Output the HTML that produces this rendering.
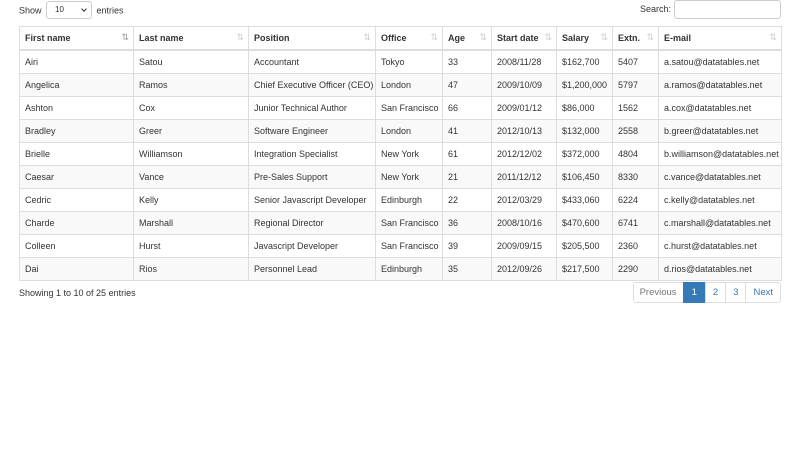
<!DOCTYPE html>
<html><head><style>
body{margin:0;background:#fff;font-family:"Liberation Sans",sans-serif;font-size:9px;color:#333;}
.top{position:absolute;top:0;left:19px;width:762px;height:20px;}
.show{position:absolute;left:0;top:3px;line-height:13px;}
.sel{display:inline-block;width:46px;height:18px;border:1px solid #ccc;border-radius:3px;vertical-align:middle;margin:0 2px;position:relative;font-size:8px;line-height:16px;padding-left:8px;box-sizing:border-box;margin-top:-2px}
.sel:after{content:"";position:absolute;right:5px;top:5px;width:3px;height:3px;border-right:1.2px solid #333;border-bottom:1.2px solid #333;transform:rotate(45deg)}
.search{position:absolute;right:0;top:0;}
.search span{position:absolute;right:110px;top:4px}
.search i{display:block;width:105px;height:17px;border:1px solid #ccc;border-radius:3px;}
table{position:absolute;left:19px;top:26px;border-collapse:collapse;width:762px;table-layout:fixed}
td,th{border:1px solid #ddd;height:22px;padding:0 5px;text-align:left;white-space:nowrap;overflow:hidden;position:relative}
th{font-weight:bold;border-bottom:2px solid #ddd;color:#333}
th:after{content:"⇅";position:absolute;right:4px;top:5px;color:#ccc;font-size:9px;font-weight:normal}
th.s:after{color:#999}
tr:nth-child(odd) td{background:#f9f9f9}
.info{position:absolute;left:19px;top:288px}
.pg{position:absolute;right:19px;top:282px;display:flex;height:21px;font-size:9.5px}
.pg div{border:1px solid #ddd;margin-left:-1px;line-height:19px;padding:0 7px;color:#337ab7}
.pg .d{color:#777;padding:0 6px}.pg .a{background:#337ab7;color:#fff;border-color:#337ab7;padding:0 8px}
.pg div:first-child{border-radius:3px 0 0 3px}.pg div:last-child{border-radius:0 3px 3px 0}
</style></head><body>
<div class="top"><div class="show">Show <span class="sel">10</span> entries</div>
<div class="search"><span>Search:</span><i></i></div></div>
<table>
<colgroup><col style="width:114px"><col style="width:115px"><col style="width:127px"><col style="width:67px"><col style="width:49px"><col style="width:65px"><col style="width:56px"><col style="width:46px"><col style="width:123px"></colgroup>
<tr><th class="s">First name</th><th>Last name</th><th>Position</th><th>Office</th><th>Age</th><th>Start date</th><th>Salary</th><th>Extn.</th><th>E-mail</th></tr>
<tr><td>Airi</td><td>Satou</td><td>Accountant</td><td>Tokyo</td><td>33</td><td>2008/11/28</td><td>$162,700</td><td>5407</td><td>a.satou@datatables.net</td></tr>
<tr><td>Angelica</td><td>Ramos</td><td>Chief Executive Officer (CEO)</td><td>London</td><td>47</td><td>2009/10/09</td><td>$1,200,000</td><td>5797</td><td>a.ramos@datatables.net</td></tr>
<tr><td>Ashton</td><td>Cox</td><td>Junior Technical Author</td><td>San Francisco</td><td>66</td><td>2009/01/12</td><td>$86,000</td><td>1562</td><td>a.cox@datatables.net</td></tr>
<tr><td>Bradley</td><td>Greer</td><td>Software Engineer</td><td>London</td><td>41</td><td>2012/10/13</td><td>$132,000</td><td>2558</td><td>b.greer@datatables.net</td></tr>
<tr><td>Brielle</td><td>Williamson</td><td>Integration Specialist</td><td>New York</td><td>61</td><td>2012/12/02</td><td>$372,000</td><td>4804</td><td>b.williamson@datatables.net</td></tr>
<tr><td>Caesar</td><td>Vance</td><td>Pre-Sales Support</td><td>New York</td><td>21</td><td>2011/12/12</td><td>$106,450</td><td>8330</td><td>c.vance@datatables.net</td></tr>
<tr><td>Cedric</td><td>Kelly</td><td>Senior Javascript Developer</td><td>Edinburgh</td><td>22</td><td>2012/03/29</td><td>$433,060</td><td>6224</td><td>c.kelly@datatables.net</td></tr>
<tr><td>Charde</td><td>Marshall</td><td>Regional Director</td><td>San Francisco</td><td>36</td><td>2008/10/16</td><td>$470,600</td><td>6741</td><td>c.marshall@datatables.net</td></tr>
<tr><td>Colleen</td><td>Hurst</td><td>Javascript Developer</td><td>San Francisco</td><td>39</td><td>2009/09/15</td><td>$205,500</td><td>2360</td><td>c.hurst@datatables.net</td></tr>
<tr><td>Dai</td><td>Rios</td><td>Personnel Lead</td><td>Edinburgh</td><td>35</td><td>2012/09/26</td><td>$217,500</td><td>2290</td><td>d.rios@datatables.net</td></tr>
</table>
<div class="info">Showing 1 to 10 of 25 entries</div>
<div class="pg"><div class="d">Previous</div><div class="a">1</div><div>2</div><div>3</div><div>Next</div></div>
</body></html>
